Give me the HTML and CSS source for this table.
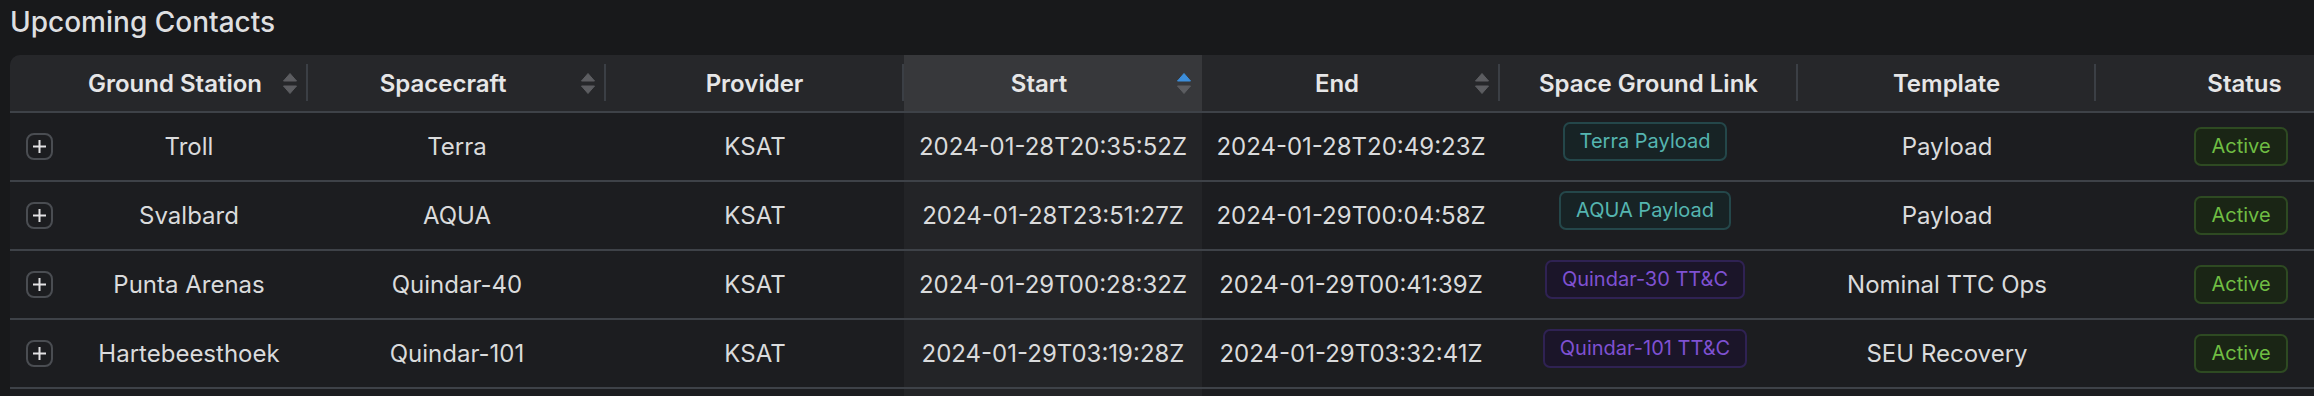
FILE: index.html
```html
<!DOCTYPE html>
<html lang="en">
<head>
<meta charset="utf-8">
<title>Upcoming Contacts</title>
<link rel="stylesheet" href="styles.css">
</head>
<body>
<h1 class="title">Upcoming Contacts</h1>
<div class="table">
  <div class="row head">
    <div class="hcell expand-col"></div>
    <div class="hcell sep"><span class="label">Ground Station</span><svg class="sort" viewBox="0 0 14 21"><path class="up" d="M7 0.5 L13.5 8 H0.5 Z"/><path class="down" d="M0.5 13 H13.5 L7 20.5 Z"/></svg></div>
    <div class="hcell sep"><span class="label">Spacecraft</span><svg class="sort" viewBox="0 0 14 21"><path class="up" d="M7 0.5 L13.5 8 H0.5 Z"/><path class="down" d="M0.5 13 H13.5 L7 20.5 Z"/></svg></div>
    <div class="hcell sep"><span class="label">Provider</span></div>
    <div class="hcell sorted-head"><span class="label">Start</span><svg class="sort" viewBox="0 0 14 21"><path class="up active" d="M7 0.5 L13.5 8 H0.5 Z"/><path class="down" d="M0.5 13 H13.5 L7 20.5 Z"/></svg></div>
    <div class="hcell sep"><span class="label">End</span><svg class="sort" viewBox="0 0 14 21"><path class="up" d="M7 0.5 L13.5 8 H0.5 Z"/><path class="down" d="M0.5 13 H13.5 L7 20.5 Z"/></svg></div>
    <div class="hcell sep"><span class="label">Space Ground Link</span></div>
    <div class="hcell sep"><span class="label">Template</span></div>
    <div class="hcell"><span class="label">Status</span></div>
  </div>

  <div class="row">
    <div class="cell expand-col"><span class="expand"><svg viewBox="0 0 13 13"><path d="M6.5 0 V13 M0 6.5 H13"/></svg></span></div>
    <div class="cell">Troll</div>
    <div class="cell">Terra</div>
    <div class="cell">KSAT</div>
    <div class="cell sorted">2024-01-28T20:35:52Z</div>
    <div class="cell">2024-01-28T20:49:23Z</div>
    <div class="cell"><span class="badge link teal">Terra Payload</span></div>
    <div class="cell">Payload</div>
    <div class="cell"><span class="badge green">Active</span></div>
  </div>

  <div class="row">
    <div class="cell expand-col"><span class="expand"><svg viewBox="0 0 13 13"><path d="M6.5 0 V13 M0 6.5 H13"/></svg></span></div>
    <div class="cell">Svalbard</div>
    <div class="cell">AQUA</div>
    <div class="cell">KSAT</div>
    <div class="cell sorted">2024-01-28T23:51:27Z</div>
    <div class="cell">2024-01-29T00:04:58Z</div>
    <div class="cell"><span class="badge link teal">AQUA Payload</span></div>
    <div class="cell">Payload</div>
    <div class="cell"><span class="badge green">Active</span></div>
  </div>

  <div class="row">
    <div class="cell expand-col"><span class="expand"><svg viewBox="0 0 13 13"><path d="M6.5 0 V13 M0 6.5 H13"/></svg></span></div>
    <div class="cell">Punta Arenas</div>
    <div class="cell">Quindar-40</div>
    <div class="cell">KSAT</div>
    <div class="cell sorted">2024-01-29T00:28:32Z</div>
    <div class="cell">2024-01-29T00:41:39Z</div>
    <div class="cell"><span class="badge link purple">Quindar-30 TT&amp;C</span></div>
    <div class="cell">Nominal TTC Ops</div>
    <div class="cell"><span class="badge green">Active</span></div>
  </div>

  <div class="row">
    <div class="cell expand-col"><span class="expand"><svg viewBox="0 0 13 13"><path d="M6.5 0 V13 M0 6.5 H13"/></svg></span></div>
    <div class="cell">Hartebeesthoek</div>
    <div class="cell">Quindar-101</div>
    <div class="cell">KSAT</div>
    <div class="cell sorted">2024-01-29T03:19:28Z</div>
    <div class="cell">2024-01-29T03:32:41Z</div>
    <div class="cell"><span class="badge link purple">Quindar-101 TT&amp;C</span></div>
    <div class="cell">SEU Recovery</div>
    <div class="cell"><span class="badge green">Active</span></div>
  </div>

  <div class="row filler">
    <div class="cell"></div>
    <div class="cell"></div>
    <div class="cell"></div>
    <div class="cell"></div>
    <div class="cell sorted"></div>
    <div class="cell"></div>
    <div class="cell"></div>
    <div class="cell"></div>
    <div class="cell"></div>
  </div>
</div>
</body>
</html>
```
FILE: styles.css
```css
html, body {
  margin: 0;
  padding: 0;
  background: #18191b;
  overflow: hidden;
}

body {
  padding: 4px 10px 0 10px;
  font-family: Inter, "Noto Sans", "Liberation Sans", sans-serif;
  color: #dadbdc;
}

.title {
  margin: 0;
  font-size: 28px;
  line-height: 34px;
  font-weight: 500;
  color: #dedfe0;
  padding-top: 1px;
}

.table {
  margin-top: 16px;
  width: 2384px;
  background: #1c1d20;
  border-radius: 10px 10px 0 0;
  overflow: hidden;
}

.row {
  display: grid;
  grid-template-columns: 60px 238px repeat(7, 298px);
  height: 67px;
  border-bottom: 2px solid #3e4248;
}

.row.head {
  height: 56px;
  background: #26272a;
}

.row.filler {
  height: 20px;
  border-bottom: none;
}

.hcell {
  position: relative;
  display: flex;
  align-items: center;
  padding: 0 11px 0 10px;
  font-size: 24px;
  font-weight: 600;
  color: #e6e6e7;
}

.hcell .label {
  flex: 1;
  text-align: center;
  white-space: nowrap;
}

.hcell.sep::after {
  content: "";
  position: absolute;
  right: 0;
  top: 9px;
  bottom: 10px;
  width: 2px;
  background: #3b3f45;
}

.hcell.sorted-head {
  background: #37383b;
}

.sort {
  width: 14px;
  height: 21px;
  margin-left: 13px;
  flex: none;
}

.sort path {
  fill: #5c5d61;
  stroke: #5c5d61;
  stroke-width: 1;
  stroke-linejoin: round;
}

.sort path.active {
  fill: #3c8edb;
  stroke: #3c8edb;
}

.cell {
  display: flex;
  align-items: center;
  justify-content: center;
  font-size: 24px;
  white-space: nowrap;
}

.cell.sorted {
  background: #232427;
}

.expand {
  width: 23px;
  height: 23px;
  border: 2px solid #4a4d52;
  border-radius: 8px;
  display: flex;
  align-items: center;
  justify-content: center;
  margin-right: 1px;
}

.expand svg {
  width: 13px;
  height: 13px;
}

.expand path {
  stroke: #e2e2e3;
  stroke-width: 2;
  fill: none;
}

.badge {
  display: inline-block;
  font-size: 20px;
  line-height: 25px;
  padding: 5px 15px;
  border: 2px solid;
  border-radius: 7px;
  margin-right: 8px;
}

.badge.link {
  margin-bottom: 11px;
}

.badge.teal {
  background: #172325;
  border-color: #24474a;
  color: #55b5b0;
}

.badge.purple {
  background: #1b1529;
  border-color: #2f2253;
  color: #7f51d2;
}

.badge.green {
  background: #1a2515;
  border-color: #2e4a22;
  color: #6fbd43;
}
```
